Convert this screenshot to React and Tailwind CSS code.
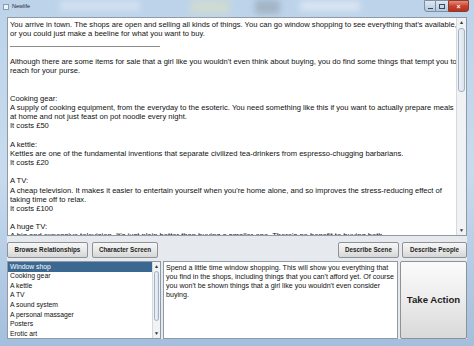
import React from "react";

const storyTop = [
  "You arrive in town. The shops are open and selling all kinds of things. You can go window shopping to see everything that's available,",
  "or you could just make a beeline for what you want to buy.",
];

const storyRest = [
  "Although there are some items for sale that a girl like you wouldn't even think about buying, you do find some things that tempt you to",
  "reach for your purse.",
  "",
  "",
  "Cooking gear:",
  "A supply of cooking equipment, from the everyday to the esoteric. You need something like this if you want to actually prepare meals",
  "at home and not just feast on pot noodle every night.",
  "It costs £50",
  "",
  "A kettle:",
  "Kettles are one of the fundamental inventions that separate civilized tea-drinkers from espresso-chugging barbarians.",
  "It costs £20",
  "",
  "A TV:",
  "A cheap television. It makes it easier to entertain yourself when you're home alone, and so improves the stress-reducing effect of",
  "taking time off to relax.",
  "It costs £100",
  "",
  "A huge TV:",
  "A big and expensive television. It's just plain better than buying a smaller one. There's no benefit to buying both.",
];

const actions = [
  "Window shop",
  "Cooking gear",
  "A kettle",
  "A TV",
  "A sound system",
  "A personal massager",
  "Posters",
  "Erotic art",
];

const descLines = [
  "Spend a little time window shopping. This will show you everything that",
  "you find in the shops, including things that you can't afford yet. Of course",
  "you won't be shown things that a girl like you wouldn't even consider",
  "buying.",
];

const font = { fontFamily: '"Liberation Sans", Arial, sans-serif' };

const SmallButton = ({ label, className = "" }) => (
  <div
    className={`flex h-[16px] items-center justify-center rounded-[2px] border border-[#8e9296] bg-gradient-to-b from-[#f6f6f6] via-[#e9e9e9] to-[#d6d6d6] text-[6.3px] font-bold text-[#1e1e1e] ${className}`}
  >
    {label}
  </div>
);

const ScrollBar = ({ thumbTop, thumbHeight, className = "" }) => (
  <div
    className={`flex flex-col border-l border-[#d6d9dd] bg-[#f1f2f4] ${className}`}
  >
    <div className="flex h-[9px] items-center justify-center text-[5px] leading-none text-[#333]">
      ▲
    </div>
    <div className="relative flex-1">
      <div
        className="absolute left-[1px] right-[1px] rounded-[3px] border border-[#9db1c7] bg-gradient-to-r from-[#eef2f7] to-[#dbe3ec]"
        style={{ top: thumbTop, height: thumbHeight }}
      />
    </div>
    <div className="flex h-[9px] items-center justify-center text-[5px] leading-none text-[#333]">
      ▼
    </div>
  </div>
);

export default function App() {
  return (
    <div
      className="relative flex h-[346px] w-[474px] flex-col overflow-hidden bg-gradient-to-b from-[#bcd3ea] via-[#c8dbee] to-[#a3bfdd]"
      style={font}
    >
      {/* title bar */}
      <div className="relative flex h-[17px] items-start">
        <div className="absolute left-[190px] top-0 h-[14px] w-[40px] bg-[#d9dfc4] opacity-60 blur-[3px]" />
        <div className="absolute left-[255px] top-0 h-[14px] w-[25px] bg-[#8a97a3] opacity-50 blur-[3px]" />
        <div className="absolute left-[300px] top-[1px] h-[10px] w-[60px] bg-[#e6edf5] opacity-70 blur-[3px]" />
        <div className="absolute left-[60px] top-[1px] h-[10px] w-[80px] bg-[#dbe7f3] opacity-70 blur-[3px]" />
        <div className="relative ml-[3px] mt-[4px] flex items-center gap-[3px]">
          <div className="h-[6px] w-[6px] border border-[#8a9bb0] bg-[#eef3f8]" />
          <span className="text-[5.5px] leading-none text-[#1d2733]">Newlife</span>
        </div>
        <div className="relative ml-auto mr-[5px] flex h-[12px]">
          <div className="flex w-[12px] items-end justify-center rounded-bl-[3px] border border-[#7c8ea3] bg-gradient-to-b from-[#dfe8f2] to-[#b4c7dc] pb-[2px]">
            <div className="h-[1px] w-[5px] bg-[#3b4b5c]" />
          </div>
          <div className="flex w-[12px] items-center justify-center border-y border-[#7c8ea3] bg-gradient-to-b from-[#dfe8f2] to-[#b4c7dc]">
            <div className="h-[5px] w-[6px] border border-[#3b4b5c]" />
          </div>
          <div className="flex w-[21px] items-center justify-center rounded-br-[3px] border border-[#8b3a2e] bg-gradient-to-b from-[#e58c7c] via-[#c9412d] to-[#b6311f] text-[7px] font-bold leading-none text-white">
            ×
          </div>
        </div>
      </div>

      {/* client area */}
      <div className="mx-[7px] flex h-[322px] flex-col bg-[#e6e9ed]">
        {/* story pane */}
        <div className="flex h-[219px] border border-[#8f9aa6] bg-white">
          <div className="flex-1 overflow-hidden pl-[2px] pt-[2px] text-[7.6px] leading-[9.17px] text-[#111]">
            {storyTop.map((line, i) => (
              <div key={i} className="h-[9.17px] whitespace-nowrap">
                {line}
              </div>
            ))}
            <div className="flex h-[19px] items-start pt-[8px]">
              <div className="h-[1px] w-[150px] bg-[#8c8c8c]" />
            </div>
            {storyRest.map((line, i) => (
              <div key={i} className="h-[9.17px] whitespace-nowrap">
                {line}
              </div>
            ))}
          </div>
          <ScrollBar thumbTop={1} thumbHeight={64} className="w-[10px]" />
        </div>

        {/* button row */}
        <div className="mt-[6px] flex">
          <SmallButton label="Browse Relationships" className="w-[81px]" />
          <SmallButton label="Character Screen" className="ml-[4px] w-[66px]" />
          <SmallButton label="Describe Scene" className="ml-auto w-[61px]" />
          <SmallButton label="Describe People" className="ml-[3px] w-[65px]" />
        </div>

        {/* bottom row */}
        <div className="mt-[3px] flex h-[78px]">
          <div className="flex w-[154px] border border-[#8f9aa6] bg-white">
            <div className="flex-1 overflow-hidden text-[6.8px] text-[#111]">
              {actions.map((a, i) => (
                <div
                  key={a}
                  className={`flex h-[9.6px] items-center whitespace-nowrap pl-[2px] ${
                    i === 0 ? "bg-[#3a6891] text-white" : ""
                  }`}
                >
                  {a}
                </div>
              ))}
            </div>
            <ScrollBar thumbTop={0} thumbHeight={50} className="w-[8px]" />
          </div>
          <div className="ml-[2px] w-[235px] border border-[#8f9aa6] bg-white pl-[2px] pt-[2px] text-[7.1px] leading-[9px] text-[#111]">
            {descLines.map((l, i) => (
              <div key={i} className="whitespace-nowrap">
                {l}
              </div>
            ))}
          </div>
          <div className="ml-[2px] flex flex-1 items-center justify-center rounded-[2px] border border-[#8e9296] bg-gradient-to-b from-[#fbfbfb] via-[#ececec] to-[#d9d9d9] text-[9.6px] font-bold text-[#1e1e1e]">
            Take Action
          </div>
        </div>
      </div>
    </div>
  );
}
